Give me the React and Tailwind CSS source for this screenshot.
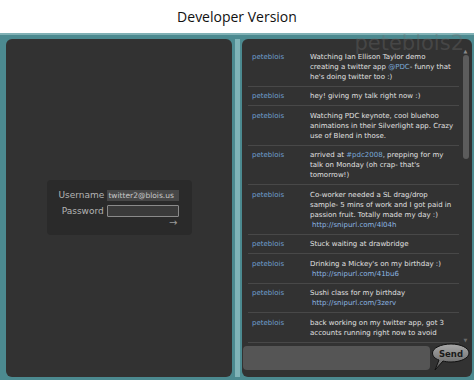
import React from "react";

// tweet rows — lines are broken by hand so they wrap as in the client
const tweets = [
    [["Watching Ian Ellison Taylor demo"], ["creating a twitter app ", { tag: "@PDC" }, "- funny that"], ["he's doing twitter too :)"]],
    [["hey! giving my talk right now :)"]],
    [["Watching PDC keynote, cool bluehoo"], ["animations in their Silverlight app. Crazy"], ["use of Blend in those."]],
    [["arrived at ", { tag: "#pdc2008" }, ", prepping for my"], ["talk on Monday (oh crap- that's"], ["tomorrow!)"]],
    [["Co-worker needed a SL drag/drop"], ["sample- 5 mins of work and I got paid in"], ["passion fruit. Totally made my day :)"], [{ link: "http://snipurl.com/4l04h" }]],
    [["Stuck waiting at drawbridge"]],
    [["Drinking a Mickey's on my birthday :)"], [{ link: "http://snipurl.com/41bu6" }]],
    [["Sushi class for my birthday"], [{ link: "http://snipurl.com/3zerv" }]],
    [["back working on my twitter app, got 3"], ["accounts running right now to avoid"]],
];

const Piece = ({ p }) => {
    if (typeof p === "string") return <span>{p}</span>;
    if (p.tag) return <span className="text-[#7aa9d8]">{p.tag}</span>;
    return <span className="pl-[2px] text-[#8cb6e2]">{p.link}</span>;
};

const TweetRow = ({ lines }) => (
    <div className="flex pt-[4.5px] pb-[4px] border-b border-[#484848] mr-[2px]">
        <div className="w-[62px] shrink-0 pl-[4px] leading-[10px] text-[#6f9fcf]">peteblois</div>
        <div className="flex flex-col text-[#e0e0e0]">
            {lines.map((l, i) => (
                <div key={i} className="leading-[10px] whitespace-nowrap">
                    {l.map((p, j) => <Piece key={j} p={p} />)}
                </div>
            ))}
        </div>
    </div>
);

const SendBubble = () => (
    <svg width="40" height="30" viewBox="0 0 40 30">
        <defs>
            <linearGradient id="sb" x1="0" y1="0" x2="0" y2="1">
                <stop offset="0" stopColor="#a8a8a8" />
                <stop offset="1" stopColor="#5c5c5c" />
            </linearGradient>
        </defs>
        <path d="M20 2 C30 2 38 6 38 11 C38 16 30 20 20 20 C17 20 14 19.6 12 19 L4 28 L8 18 C3.5 16.5 1.5 14 1.5 11 C1.5 6 10 2 20 2 Z" fill="url(#sb)" stroke="#111" strokeWidth="1" />
        <text x="20" y="14.5" textAnchor="middle" fontFamily="'DejaVu Sans', sans-serif" fontWeight="bold" fontSize="8.5" fill="#1a1a1a">Send</text>
    </svg>
);

export default function App() {
    return (
        <div className="w-[474px] h-[380px] flex flex-col bg-white overflow-hidden" style={{ fontFamily: "'DejaVu Sans', sans-serif" }}>
            <div className="h-[33px] shrink-0 flex items-center justify-center text-[14px] text-[#111]" style={{ fontFamily: "'Open Sans', sans-serif" }}>
                Developer Version
            </div>

            <div className="flex-1 flex bg-[#4c8a90] border-t-2 border-[#80b1b5] pt-[4px] pb-[7px] pl-[6px] pr-[6px]">
                {/* login panel */}
                <div className="w-[226px] shrink-0 rounded-[6px] bg-[#323232] flex items-center justify-center">
                    <div className="w-[145px] h-[55px] rounded-[4px] bg-[#2a2a2a] pt-[9px] pl-[12px] pr-[13px] flex flex-col">
                        <div className="flex items-center h-[12px]">
                            <span className="w-[46px] text-right text-[9px] leading-[10px] text-[#b4b4b4]">Username</span>
                            <span className="ml-[3px] w-[72px] h-[11px] bg-[#474747] text-[7.5px] leading-[11px] text-[#c8c8c8] pl-[1px] overflow-hidden whitespace-nowrap">twitter2@blois.us</span>
                        </div>
                        <div className="flex items-center h-[14px] mt-[3px]">
                            <span className="w-[46px] text-right text-[9px] leading-[10px] text-[#b4b4b4]">Password</span>
                            <span className="ml-[3px] w-[73px] h-[12px] bg-[#3a3a3a] border border-[#8a8a8a] rounded-[1px]"></span>
                        </div>
                        <div className="flex justify-end pr-[1px] h-[10px] text-[10px] leading-[10px] text-[#9a9a9a]">→</div>
                    </div>
                </div>

                {/* divider */}
                <div className="w-[10px] shrink-0 flex justify-center">
                    <div className="w-[5px] bg-[#80b4b8]"></div>
                </div>

                {/* tweet panel */}
                <div className="flex-1 relative rounded-[6px] bg-[#323232] flex flex-col pb-[4px]">
                    <div className="absolute right-[8px] top-[-8px] text-[21px] leading-[24px] text-[rgba(110,110,110,0.35)] select-none pointer-events-none">peteblois2</div>
                    <div className="flex-1 flex overflow-hidden pt-[8px] pl-[6px] pr-[2px]">
                        <div className="flex-1 flex flex-col text-[7px] overflow-hidden">
                            {tweets.map((t, i) => <TweetRow key={i} lines={t} />)}
                        </div>
                        <div className="w-[9px] shrink-0 flex flex-col items-center pt-[1px]">
                            <div className="text-[5px] leading-[6px] text-[#8a8a8a]">▲</div>
                            <div className="w-[6px] h-[104px] mt-[1px] rounded-[3px] bg-[#5c5c5c]"></div>
                            <div className="flex-1"></div>
                            <div className="text-[5px] leading-[6px] text-[#6a6a6a]">▼</div>
                        </div>
                    </div>
                    <div className="flex items-center pl-[1px] pr-[1px] h-[30px]">
                        <div className="w-[187px] h-[24px] rounded-[4px] bg-[#555555]"></div>
                        <div className="ml-[1px] -mt-[1px]"><SendBubble /></div>
                    </div>
                </div>
            </div>
        </div>
    );
}
